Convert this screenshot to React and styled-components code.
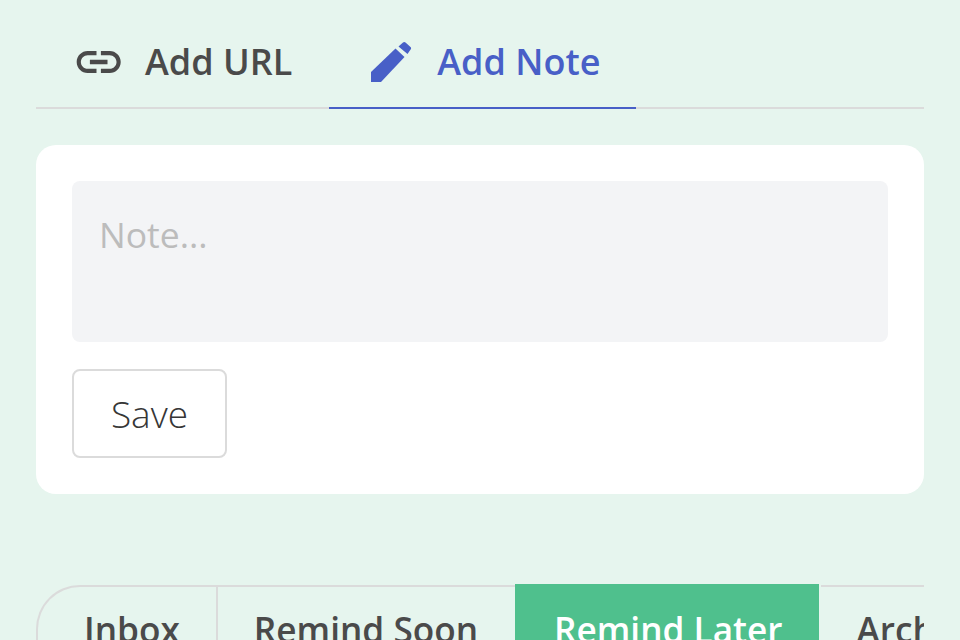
import React from 'react';
import styled, { createGlobalStyle } from 'styled-components';

const GlobalStyle = createGlobalStyle`
  html, body {
    margin: 0;
    height: 100%;
    overflow: hidden;
    background: #e6f5ee;
    font-family: "Open Sans", "Noto Sans", sans-serif;
  }
  * {
    box-sizing: border-box;
  }
`;

const tabs = ['Inbox', 'Remind Soon', 'Remind Later', 'Archive'];

function App() {
  return (
    <Page>
      <GlobalStyle />
      <TopTabs>
        <TopTab>
          <LinkIcon viewBox="-0.25 2.2 44.5 43.6">
            <path d="M7.8 24c0-3.42 2.78-6.2 6.2-6.2h8V14h-8C8.48 14 4 18.48 4 24s4.48 10 10 10h8v-3.8h-8c-3.42 0-6.2-2.78-6.2-6.2zM16 26h16v-4H16v4zm18-12h-8v3.8h8c3.42 0 6.2 2.78 6.2 6.2s-2.78 6.2-6.2 6.2h-8V34h8c5.52 0 10-4.48 10-10s-4.48-10-10-10z" />
          </LinkIcon>
          Add URL
        </TopTab>
        <TopTab active>
          <TabIcon viewBox="0 0 48 48">
            <path d="M6 34 30.5 10.500 39.500 19 16 44H6z" />
            <path d="M38 4.500c.8-.7 1.800-.7 2.500 0l5 4.500c.8.700.8 1.900.1 2.600L42.500 16 33.500 8.500z" />
          </TabIcon>
          Add Note
        </TopTab>
      </TopTabs>

      <Card>
        <NoteInput placeholder="Note..." />
        <SaveButton>Save</SaveButton>
      </Card>

      <BottomTabs>
        {tabs.map((name, i) => (
          <BottomTab key={name} first={i === 0} active={name === 'Remind Later'}>
            {name}
          </BottomTab>
        ))}
      </BottomTabs>
    </Page>
  );
}

const Page = styled.div`
  height: 640px;
  padding: 38px 36px 0;
  overflow: hidden;
`;

const TopTabs = styled.div`
  display: flex;
  gap: 1px;
  height: 71px;
  border-bottom: 2px solid #dbdbdb;
`;

const TopTab = styled.a`
  display: flex;
  align-items: flex-start;
  gap: 24px;
  height: 71px;
  padding: 0 36px;
  font-size: 36px;
  line-height: 48px;
  font-weight: 600;
  color: ${(p) => (p.active ? '#485fc7' : '#4a4a4a')};
  fill: ${(p) => (p.active ? '#485fc7' : '#4a4a4a')};
  border-bottom: 2px solid ${(p) => (p.active ? '#485fc7' : 'transparent')};
`;

const TabIcon = styled.svg`
  width: 48px;
  height: 48px;
  flex-shrink: 0;
  fill: inherit;
`;

const LinkIcon = styled(TabIcon)`
  width: 49px;
`;

const Card = styled.div`
  display: flex;
  flex-direction: column;
  align-items: flex-start;
  gap: 27px;
  height: 349px;
  margin-top: 36px;
  padding: 36px;
  background: #fff;
  border-radius: 20px;
`;

const NoteInput = styled.textarea`
  display: block;
  width: 100%;
  height: 162px;
  margin: 0;
  padding: 26px 27px;
  border: none;
  outline: none;
  resize: none;
  border-radius: 8px;
  background: #f3f4f6;
  font-family: inherit;
  font-size: 35.5px;
  font-weight: 400;
  line-height: 54px;
  color: #363636;

  &::placeholder {
    color: #bcbcbc;
    opacity: 1;
  }
`;

const SaveButton = styled.button`
  width: 155px;
  height: 90px;
  padding: 0;
  background: #fff;
  border: 2px solid #dbdbdb;
  border-radius: 8px;
  font-family: inherit;
  font-size: 37px;
  font-weight: 300;
  color: #363636;
`;

const BottomTabs = styled.div`
  display: flex;
  margin-top: 90px;
  height: 120px;
  overflow: hidden;
`;

const BottomTab = styled.div`
  flex-shrink: 0;
  height: 100px;
  margin-top: ${(p) => (p.active ? '0' : '1px')};
  margin-right: ${(p) => (p.active ? '2px' : '0')};
  padding: ${(p) => (p.active ? '16px 36px 0 39px' : p.first ? '15px 36px 0 46px' : '15px 37px 0 36px')};
  font-size: 35.2px;
  line-height: 54px;
  font-weight: 600;
  color: ${(p) => (p.active ? '#fff' : '#4a4a4a')};
  background: ${(p) => (p.active ? '#4fc08d' : 'transparent')};
  border-top: 2px solid ${(p) => (p.active ? '#4fc08d' : '#dbdbdb')};
  border-left: ${(p) => (p.first ? '2px solid #dbdbdb' : 'none')};
  border-right: ${(p) => (p.first ? '2px solid #dbdbdb' : 'none')};
  border-top-left-radius: ${(p) => (p.first ? '44px' : '0')};
`;

export default App;
